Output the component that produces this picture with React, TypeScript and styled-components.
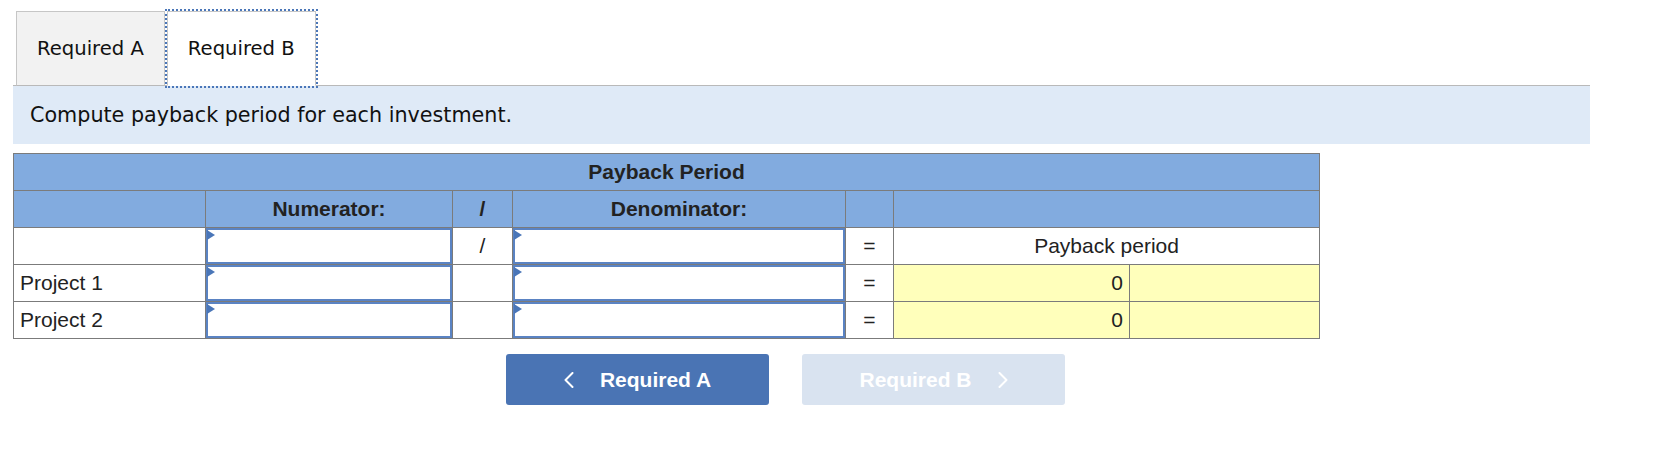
import React from "react";
import styled, { createGlobalStyle } from "styled-components";

const GlobalStyle = createGlobalStyle`
  html, body {
    margin: 0;
    padding: 0;
    background: #fff;
  }
  body {
    font-family: "Liberation Sans", Arial, sans-serif;
    color: #222;
  }
`;

const Page = styled.div`
  width: 1577px;
  padding: 11px 0 0 13px;
`;

const TabBar = styled.div`
  display: flex;
  gap: 2px;
  padding-left: 3px;
  border-bottom: 1px solid #b9b9b9;
`;

const Tab = styled.button<{ $active?: boolean }>`
  box-sizing: border-box;
  height: 75px;
  padding: 0 20px;
  margin-bottom: -1px;
  border: 1px solid #c6c6c6;
  border-bottom: ${(p) => (p.$active ? "1px solid #fff" : "1px solid #b9b9b9")};
  background: ${(p) => (p.$active ? "#fff" : "#f2f2f2")};
  font-family: "DejaVu Sans", Verdana, sans-serif;
  font-size: 19.6px;
  color: #111;
  outline: ${(p) => (p.$active ? "2px dotted #4a76b8" : "none")};
  outline-offset: 0;
  cursor: pointer;
`;

const Instruction = styled.div`
  height: 58px;
  display: flex;
  align-items: center;
  padding-left: 17px;
  background: #dfeaf7;
  font-family: "DejaVu Sans", Verdana, sans-serif;
  font-size: 20.7px;
  color: #111;
`;

const Grid = styled.table`
  margin-top: 9px;
  width: 1306px;
  border-collapse: collapse;
  table-layout: fixed;
  font-size: 21px;
  color: #222;
`;

const Row = styled.tr`
  height: 37px;
`;

const HeadCell = styled.th`
  padding: 0 5px;
  border: 1px solid #7b7b7b;
  background: #82abdf;
  font-weight: 700;
  text-align: center;
  color: #222;
`;

const Cell = styled.td<{ $align?: "left" | "center" | "right"; $tint?: boolean }>`
  padding: 0 6px;
  border: 1px solid #7b7b7b;
  background: ${(p) => (p.$tint ? "#ffffbb" : "#fff")};
  text-align: ${(p) => p.$align ?? "center"};
`;

const InputCell = styled.td`
  position: relative;
  padding: 0;
  border: 1px solid #7b7b7b;
  background: #fff;
`;

const Entry = styled.input`
  box-sizing: border-box;
  display: block;
  width: 100%;
  height: 36px;
  margin: 0;
  border: 2px solid #5a83c3;
  background: #fff;
  font-family: "Liberation Sans", Arial, sans-serif;
  font-size: 20px;
`;

const Marker = styled.span`
  position: absolute;
  top: 2px;
  left: 1px;
  width: 0;
  height: 0;
  border-top: 5px solid transparent;
  border-bottom: 5px solid transparent;
  border-left: 8px solid #4a76b8;
  pointer-events: none;
`;

const Nav = styled.div`
  display: flex;
  gap: 33px;
  margin-top: 15px;
  padding-left: 493px;
`;

const NavButton = styled.button<{ $disabled?: boolean }>`
  width: 263px;
  height: 51px;
  display: flex;
  align-items: center;
  justify-content: center;
  gap: 26px;
  border: none;
  border-radius: 3px;
  background: ${(p) => (p.$disabled ? "#d9e3f0" : "#4a74b4")};
  color: #fff;
  font-family: "Liberation Sans", Arial, sans-serif;
  font-weight: 700;
  font-size: 21px;
  cursor: ${(p) => (p.$disabled ? "default" : "pointer")};
`;

const Chevron = ({ dir }: { dir: "left" | "right" }) => (
  <svg width="10" height="16" viewBox="0 0 10 16" fill="none">
    <polyline
      points={dir === "left" ? "8.5,1 1.5,8 8.5,15" : "1.5,1 8.5,8 1.5,15"}
      stroke="#fff"
      strokeWidth="2"
      strokeLinecap="round"
      strokeLinejoin="round"
    />
  </svg>
);

const InputBox = () => (
  <InputCell>
    <Entry type="text" />
    <Marker />
  </InputCell>
);

const projects = ["Project 1", "Project 2"];

export default function App() {
  return (
    <>
      <GlobalStyle />
      <Page>
        <TabBar>
          <Tab>Required A</Tab>
          <Tab $active>Required B</Tab>
        </TabBar>
        <Instruction>Compute payback period for each investment.</Instruction>

        <Grid>
          <colgroup>
            <col style={{ width: 192 }} />
            <col style={{ width: 247 }} />
            <col style={{ width: 60 }} />
            <col style={{ width: 333 }} />
            <col style={{ width: 48 }} />
            <col style={{ width: 236 }} />
            <col style={{ width: 190 }} />
          </colgroup>
          <thead>
            <Row>
              <HeadCell colSpan={7}>Payback Period</HeadCell>
            </Row>
            <Row>
              <HeadCell />
              <HeadCell>Numerator:</HeadCell>
              <HeadCell>/</HeadCell>
              <HeadCell>Denominator:</HeadCell>
              <HeadCell />
              <HeadCell colSpan={2} />
            </Row>
          </thead>
          <tbody>
            <Row>
              <Cell />
              <InputBox />
              <Cell>/</Cell>
              <InputBox />
              <Cell>=</Cell>
              <Cell colSpan={2}>Payback period</Cell>
            </Row>
            {projects.map((name) => (
              <Row key={name}>
                <Cell $align="left">{name}</Cell>
                <InputBox />
                <Cell />
                <InputBox />
                <Cell>=</Cell>
                <Cell $align="right" $tint>
                  0
                </Cell>
                <Cell $tint />
              </Row>
            ))}
          </tbody>
        </Grid>

        <Nav>
          <NavButton>
            <Chevron dir="left" />
            <span>Required A</span>
          </NavButton>
          <NavButton $disabled>
            <span>Required B</span>
            <Chevron dir="right" />
          </NavButton>
        </Nav>
      </Page>
    </>
  );
}
